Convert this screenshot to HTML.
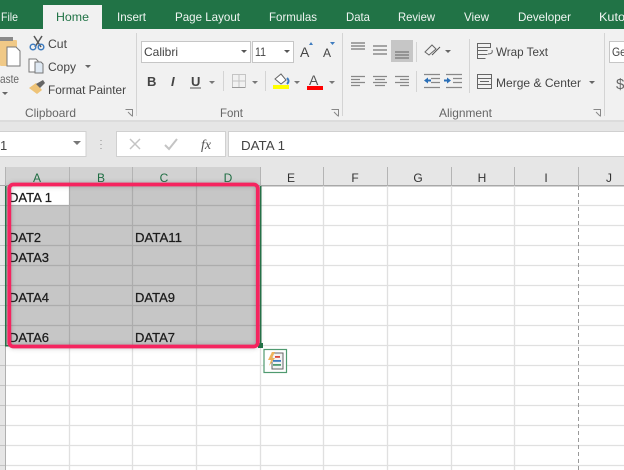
<!DOCTYPE html>
<html><head><meta charset="utf-8"><style>
html,body{margin:0;padding:0;background:#fff;overflow:hidden}
svg{display:block;filter:blur(.3px)}
text{font-family:"Liberation Sans",sans-serif;fill:#444;font-size:12px}
.t{fill:#f0f5f2;font-size:12px}
.c{fill:#1c1c1c;font-size:13px;stroke:#1c1c1c;stroke-width:.25px}
.h{fill:#333;font-size:12px;text-anchor:middle}
.hs{fill:#1f6e43;font-size:12px;text-anchor:middle}
.g{fill:#666;font-size:11.5px}
</style></head><body>
<svg width="624" height="470" viewBox="0 0 624 470" xmlns="http://www.w3.org/2000/svg">
<defs><filter id="s" x="-5%" y="-5%" width="110%" height="110%"><feGaussianBlur stdDeviation="2"/></filter></defs>
<rect width="624" height="470" fill="#fff"/>
<!-- title tabs -->
<rect width="624" height="29" fill="#217346"/>
<rect x="43" y="5" width="59" height="25" fill="#f1f1f1"/>
<text class="t" x="1" y="21" textLength="17" lengthAdjust="spacingAndGlyphs">File</text>
<text x="56" y="21" fill="#217346" style="fill:#217346" textLength="33" lengthAdjust="spacingAndGlyphs">Home</text>
<text class="t" x="117" y="21" textLength="29" lengthAdjust="spacingAndGlyphs">Insert</text>
<text class="t" x="175" y="21" textLength="65" lengthAdjust="spacingAndGlyphs">Page Layout</text>
<text class="t" x="269" y="21" textLength="48" lengthAdjust="spacingAndGlyphs">Formulas</text>
<text class="t" x="346" y="21" textLength="24" lengthAdjust="spacingAndGlyphs">Data</text>
<text class="t" x="398" y="21" textLength="37" lengthAdjust="spacingAndGlyphs">Review</text>
<text class="t" x="464" y="21" textLength="25" lengthAdjust="spacingAndGlyphs">View</text>
<text class="t" x="518" y="21" textLength="53" lengthAdjust="spacingAndGlyphs">Developer</text>
<text class="t" x="599" y="21" textLength="26" lengthAdjust="spacingAndGlyphs">Kuto</text>
<!-- ribbon -->
<rect y="29" width="624" height="91" fill="#f1f1f1"/>
<rect y="120" width="624" height="47" fill="#e6e6e6"/>
<rect y="120" width="624" height="2" fill="#dcdcdc"/>
<g stroke="#d4d4d4" stroke-width="1">
<path d="M136.500 33V116M342.500 33V116M604.500 33V116M469.500 39V93M416.500 42V62M416.500 71V92M223.500 71V91M265.500 71V91"/>
</g>
<!-- paste -->
<rect x="0" y="40" width="17" height="26" rx="1" fill="#f0c987"/>
<path d="M0 37h13v4H0z" fill="#8a8a8a"/>
<path d="M7 47h9l4 4v15H7z" fill="#fff" stroke="#777"/>
<text x="0" y="83" class="g" textLength="19" lengthAdjust="spacingAndGlyphs" style="font-size:12px">aste</text>
<path d="M2 92h6l-3 3z" fill="#666"/>
<!-- cut -->
<path d="M34 36l7 11M42 36l-7 11" stroke="#555" stroke-width="1.5" fill="none"/>
<circle cx="33" cy="47" r="2.800" fill="none" stroke="#3f7cbf" stroke-width="1.500"/>
<circle cx="41" cy="47" r="2.800" fill="none" stroke="#3f7cbf" stroke-width="1.500"/>
<text x="48" y="48" textLength="19" lengthAdjust="spacingAndGlyphs">Cut</text>
<!-- copy -->
<path d="M29 59h7l2 2v11h-9z" fill="#fff" stroke="#777"/>
<path d="M35 62h6l2 2v9h-8z" fill="#dfe9f3" stroke="#777"/>
<text x="48" y="71" textLength="28" lengthAdjust="spacingAndGlyphs">Copy</text>
<path d="M85 65h6l-3 3z" fill="#666"/>
<!-- format painter -->
<path d="M29 88l7-5 6 7-5 4z" fill="#eec377"/>
<path d="M36 84l7-4 2 3-5 5z" fill="#666"/>
<text x="48" y="94" textLength="78" lengthAdjust="spacingAndGlyphs">Format Painter</text>
<text x="25" y="117" style="fill:#666" textLength="51" lengthAdjust="spacingAndGlyphs">Clipboard</text>
<path d="M125.500 109.500h7v7M128 112l4 4" stroke="#888" fill="none"/>
<!-- font -->
<rect x="141.500" y="41.500" width="109" height="21" fill="#fff" stroke="#c6c6c6"/>
<rect x="252.500" y="41.500" width="41" height="21" fill="#fff" stroke="#c6c6c6"/>
<text x="144" y="56" textLength="34" lengthAdjust="spacingAndGlyphs">Calibri</text>
<path d="M241 50h6l-3 3z" fill="#555"/>
<text x="255" y="56" textLength="11" lengthAdjust="spacingAndGlyphs">11</text>
<path d="M284 50h6l-3 3z" fill="#555"/>
<text x="300" y="57" style="font-size:14px">A</text>
<path d="M309 45l2-3 2 3z" fill="#3f7cbf"/>
<text x="323" y="57" style="font-size:12px">A</text>
<path d="M330 42h5l-2.500 3z" fill="#3f7cbf"/>
<text x="147" y="86" style="font-weight:bold;font-size:13px">B</text>
<text x="171" y="86" style="font-style:italic;font-weight:bold;font-size:13px">I</text>
<text x="191" y="86" style="font-weight:bold;font-size:13px">U</text>
<path d="M190 88h11" stroke="#555" stroke-width="1"/>
<path d="M209 81h6l-3 3z" fill="#777"/>
<path d="M232.500 74.500h13v13h-13zM239 74v13M232 81h13" stroke="#c4c4c4" fill="none"/>
<path d="M232 87.500h13" stroke="#999"/>
<path d="M252 81h6l-3 3z" fill="#777"/>
<path d="M275 79l6-5 5 6-5 4z" fill="#fff" stroke="#666"/>
<path d="M287 78c2 2 2 4 0 6" stroke="#3f7cbf" stroke-width="2" fill="none"/>
<rect x="273" y="85" width="16" height="4" fill="#ffff00"/>
<path d="M294 81h6l-3 3z" fill="#777"/>
<text x="309" y="85" style="font-size:14px;fill:#555">A</text>
<rect x="307" y="86" width="16" height="4" fill="#ff0000"/>
<path d="M329 81h6l-3 3z" fill="#777"/>
<text x="220" y="117" style="fill:#666" textLength="23" lengthAdjust="spacingAndGlyphs">Font</text>
<path d="M331.500 109.500h7v7M334 112l4 4" stroke="#888" fill="none"/>
<!-- alignment -->
<g stroke="#777" stroke-width="1.300" fill="none">
<path d="M351 43h14M351 46h14M351 49h14"/>
<path d="M373 46h14M373 50h14M373 54h14"/>
</g>
<rect x="391" y="40" width="22" height="22" fill="#c6c6c6"/>
<path d="M395 52h14M395 55h14M395 58h14" stroke="#777" stroke-width="1.300"/>
<path d="M425 52l7-7 4 4-7 6z" fill="none" stroke="#666"/>
<path d="M432 55l8-8" stroke="#555"/>
<path d="M445 50h6l-3 3z" fill="#666"/>
<g stroke="#888" stroke-width="1.300" fill="none">
<path d="M351 76.500h14M351 79.500h9M351 82.500h14M351 85.500h9"/>
<path d="M373 76.500h14M375 79.500h10M373 82.500h14M375 85.500h10"/>
<path d="M395 76.500h14M400 79.500h9M395 82.500h14M400 85.500h9"/>
<path d="M424 74.500h16M431 78.500h9M431 82.500h9M424 87.500h16"/>
<path d="M446 74.500h16M453 78.500h9M453 82.500h9M446 87.500h16"/>
</g>
<path d="M424 80.500l4-3v2h3v2h-3v2z" fill="#2a6fb7"/>
<path d="M451 80.500l-4-3v2h-3v2h3v2z" fill="#2a6fb7"/>
<path d="M477.500 43.500h13v4h-13zM477.500 50.500h10M477.500 54.500h10M477.500 58.500h8M477.500 43v16M492 50c1 3-1 4-4 4" stroke="#666" fill="none"/>
<text x="496" y="56" textLength="52" lengthAdjust="spacingAndGlyphs">Wrap Text</text>
<path d="M477.500 74.500h14v14h-14zM477.500 78.500h14M477.500 84.500h14M480 81.500h9" stroke="#666" fill="none"/>
<text x="496" y="87" textLength="85" lengthAdjust="spacingAndGlyphs">Merge &amp; Center</text>
<path d="M589 81h6l-3 3z" fill="#666"/>
<text x="439" y="117" style="fill:#666" textLength="53" lengthAdjust="spacingAndGlyphs">Alignment</text>
<path d="M593.500 109.500h7v7M596 112l4 4" stroke="#888" fill="none"/>
<rect x="609.500" y="41.500" width="20" height="21" fill="#fff" stroke="#c6c6c6"/>
<text x="612" y="56" textLength="14" lengthAdjust="spacingAndGlyphs">Ge</text>
<text x="616" y="89" style="font-size:15px;fill:#666">$</text>
<!-- formula bar -->
<rect x="-2" y="131.500" width="88" height="25" fill="#fff" stroke="#d0d0d0"/>
<text x="0" y="150" style="font-size:13px">1</text>
<path d="M73 141h8l-4 4z" fill="#777"/>
<path d="M101 140v1M101 144v1M101 148v1" stroke="#aaa" stroke-width="1.500"/>
<rect x="116.500" y="131.500" width="109" height="25" fill="#fff" stroke="#d0d0d0"/>
<rect x="228.500" y="131.500" width="400" height="25" fill="#fff" stroke="#d0d0d0"/>
<path d="M130 139l10 10M140 139l-10 10" stroke="#c4c4c4" stroke-width="1.500"/>
<path d="M165 145l4 4 8-10" stroke="#c4c4c4" stroke-width="2" fill="none"/>
<text x="201" y="149" style="font-family:'Liberation Serif',serif;font-style:italic;font-size:14px;fill:#555">fx</text>
<text x="241" y="150" style="font-size:13px" textLength="44" lengthAdjust="spacingAndGlyphs">DATA 1</text>
<!-- headers -->
<rect y="167" width="624" height="19" fill="#e6e6e6"/>
<rect x="6" y="167" width="254" height="19" fill="#d2d2d2"/>
<rect y="185" width="624" height="1.500" fill="#a8a8a8"/>
<path d="M5.500 167V186M69.500 167V186M132.500 167V186M196.500 167V186M260.500 167V186M323.500 167V186M387.500 167V186M451.500 167V186M514.500 167V186M578.500 167V186" stroke="#b4b4b4"/>
<text class="hs" x="37" y="182">A</text><text class="hs" x="101" y="182">B</text><text class="hs" x="164" y="182">C</text><text class="hs" x="228" y="182">D</text>
<text class="h" x="291" y="182">E</text><text class="h" x="355" y="182">F</text><text class="h" x="418" y="182">G</text><text class="h" x="482" y="182">H</text><text class="h" x="546" y="182">I</text><text class="h" x="609" y="182">J</text>
<!-- row header strip -->
<rect x="0" y="186" width="5" height="284" fill="#e6e6e6"/>
<!-- grid -->
<g stroke="#e0e0e0" stroke-width="1.300">
<path d="M260 205.500H624M260 225.500H624M260 245.500H624M260 265.500H624M260 285.500H624M260 305.500H624M260 325.500H624M0 345.500H624M0 365.500H624M0 385.500H624M0 405.500H624M0 425.500H624M0 445.500H624M0 465.500H624"/>
<path d="M69.500 346V470M132.500 346V470M196.500 346V470M260.500 186V470M323.500 186V470M387.500 186V470M451.500 186V470M514.500 186V470"/>
</g>
<path d="M5.500 186V470" stroke="#b0b0b0"/>
<path d="M0 205.500h5M0 225.500h5M0 245.500h5M0 265.500h5M0 285.500h5M0 305.500h5M0 325.500h5M0 345.500h5M0 365.500h5M0 385.500h5M0 405.500h5M0 425.500h5M0 445.500h5M0 465.500h5" stroke="#c4c4c4"/>
<path d="M578.500 186V470" stroke="#999" stroke-dasharray="4 3"/>
<!-- selection -->
<rect x="6" y="186" width="254" height="160" fill="#c6c6c6"/>
<rect x="9" y="186" width="60" height="19" fill="#fff"/>
<g stroke="#acacac" stroke-width="1.200">
<path d="M6 205.500H260M6 225.500H260M6 245.500H260M6 265.500H260M6 285.500H260M6 305.500H260M6 325.500H260"/>
<path d="M69.500 186V346M132.500 186V346M196.500 186V346"/>
</g>
<rect x="5" y="186" width="1.500" height="160" fill="#217346"/>
<rect x="5" y="345" width="256" height="1.500" fill="#217346"/>
<rect x="260" y="186" width="1.500" height="160" fill="#217346"/>
<rect x="258" y="343" width="5" height="5" fill="#217346"/>
<!-- cell text -->
<text class="c" x="9" y="202" textLength="43" lengthAdjust="spacingAndGlyphs">DATA 1</text>
<text class="c" x="9" y="242" textLength="32" lengthAdjust="spacingAndGlyphs">DAT2</text>
<text class="c" x="135" y="242" textLength="47" lengthAdjust="spacingAndGlyphs">DATA11</text>
<text class="c" x="9" y="262" textLength="40" lengthAdjust="spacingAndGlyphs">DATA3</text>
<text class="c" x="9" y="302" textLength="40" lengthAdjust="spacingAndGlyphs">DATA4</text>
<text class="c" x="135" y="302" textLength="40" lengthAdjust="spacingAndGlyphs">DATA9</text>
<text class="c" x="9" y="342" textLength="40" lengthAdjust="spacingAndGlyphs">DATA6</text>
<text class="c" x="135" y="342" textLength="40" lengthAdjust="spacingAndGlyphs">DATA7</text>
<!-- annotation rectangle -->
<rect x="9.500" y="184.500" width="248" height="162" rx="4" fill="none" stroke="#555" stroke-opacity=".35" stroke-width="4" filter="url(#s)"/>
<rect x="9.300" y="184.500" width="248.500" height="162" rx="4" fill="none" stroke="#f5245f" stroke-width="3.800"/>
<!-- quick analysis -->
<rect x="264" y="349.500" width="22.500" height="23" fill="#fff" stroke="#4f9a70" stroke-width="1.200"/>
<path d="M272 353h11v16h-11z" fill="#f3f3f3" stroke="#666"/>
<path d="M272 352l-4 8h3l-2 6 6-8h-3l3-6z" fill="#eeb35b"/>
<rect x="275" y="356" width="5" height="1.800" fill="#d9483b"/>
<rect x="273" y="360" width="8" height="1.800" fill="#3f7cbf"/>
<rect x="273" y="364" width="8" height="1.800" fill="#4f9a70"/>
</svg>
</body></html>
